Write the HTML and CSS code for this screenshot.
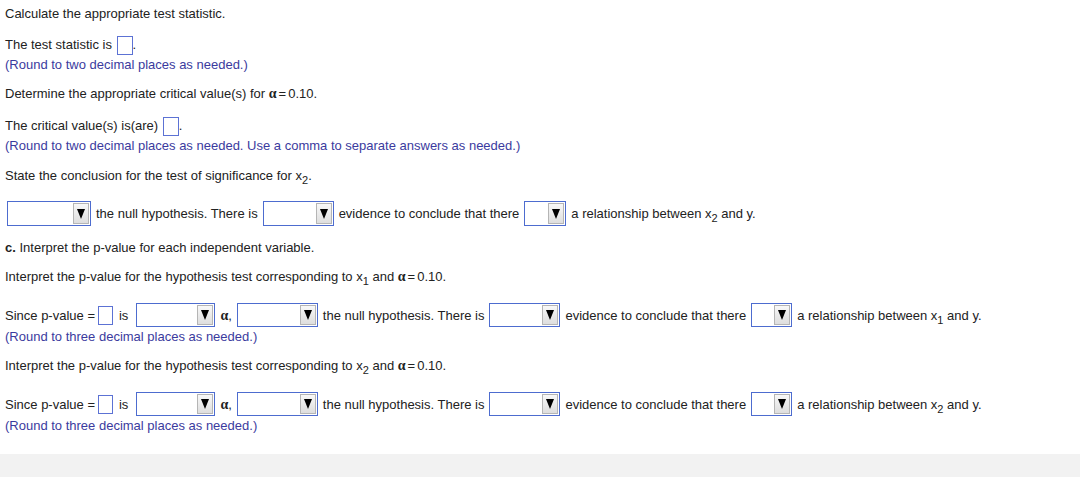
FILE: index.html
```html
<!DOCTYPE html>
<html>
<head>
<meta charset="utf-8">
<link rel="stylesheet" href="styles.css">
</head>
<body>
<div class="page">
  <div class="line l1">Calculate the appropriate test statistic.</div>
  <div class="line row20 m12">The test statistic is <span class="ans"></span>.</div>
  <div class="line note">(Round to two decimal places as needed.)</div>
  <div class="line m10">Determine the appropriate critical value(s) for <span class="alpha">α</span><span class="eq">=</span>0.10.</div>
  <div class="line row20 m13">The critical value(s) is(are) <span class="ans"></span>.</div>
  <div class="line note">(Round to two decimal places as needed. Use a comma to separate answers as needed.)</div>
  <div class="line m11">State the conclusion for the test of significance for x<sub>2</sub>.</div>
  <div class="line selrow r25">
    <span class="sel w84"><span class="btn"><i class="tri"></i></span></span>
    <span class="txt">the null hypothesis. There is</span>
    <span class="sel w71"><span class="btn"><i class="tri"></i></span></span>
    <span class="txt">evidence to conclude that there</span>
    <span class="sel w42"><span class="btn"><i class="tri"></i></span></span>
    <span class="txt">a relationship between x<sub>2</sub> and y.</span>
  </div>
  <div class="line m12"><b>c.</b> Interpret the p-value for each independent variable.</div>
  <div class="line m10">Interpret the p-value for the hypothesis test corresponding to x<sub>1</sub> and <span class="alpha">α</span><span class="eq">=</span>0.10.</div>
  <div class="line selrow r24 m17">
    <span class="txt">Since p-value =</span>
    <span class="ans small"></span>
    <span class="txt is">is</span>
    <span class="sel w79"><span class="btn"><i class="tri"></i></span></span>
    <span class="txt"><span class="alpha">α</span>,</span>
    <span class="sel w81"><span class="btn"><i class="tri"></i></span></span>
    <span class="txt">the null hypothesis. There is</span>
    <span class="sel w71"><span class="btn"><i class="tri"></i></span></span>
    <span class="txt">evidence to conclude that there</span>
    <span class="sel w41"><span class="btn"><i class="tri"></i></span></span>
    <span class="txt">a relationship between x<sub>1</sub> and y.</span>
  </div>
  <div class="line note">(Round to three decimal places as needed.)</div>
  <div class="line m10">Interpret the p-value for the hypothesis test corresponding to x<sub>2</sub> and <span class="alpha">α</span><span class="eq">=</span>0.10.</div>
  <div class="line selrow r24 m17">
    <span class="txt">Since p-value =</span>
    <span class="ans small"></span>
    <span class="txt is">is</span>
    <span class="sel w79"><span class="btn"><i class="tri"></i></span></span>
    <span class="txt"><span class="alpha">α</span>,</span>
    <span class="sel w81"><span class="btn"><i class="tri"></i></span></span>
    <span class="txt">the null hypothesis. There is</span>
    <span class="sel w71"><span class="btn"><i class="tri"></i></span></span>
    <span class="txt">evidence to conclude that there</span>
    <span class="sel w41"><span class="btn"><i class="tri"></i></span></span>
    <span class="txt">a relationship between x<sub>2</sub> and y.</span>
  </div>
  <div class="line note">(Round to three decimal places as needed.)</div>
</div>
<div class="footer"></div>
</body>
</html>
```
FILE: styles.css
```css
html, body {
  margin: 0;
  padding: 0;
  background: #fff;
}
body {
  font-family: "Liberation Sans", Arial, sans-serif;
  font-size: 13px;
  color: #222;
}
.page {
  padding: 4px 5px 0 5px;
  height: 450px;
  box-sizing: border-box;
}
.line {
  line-height: 19px;
  height: 19px;
  white-space: nowrap;
}
.row20 { height: 20px; line-height: 20px; }
.m10 { margin-top: 10px; }
.m11 { margin-top: 11px; }
.m12 { margin-top: 12px; }
.m13 { margin-top: 13px; }
.m17 { margin-top: 17px; }
.note {
  color: #3b3b9e;
}
.ans {
  display: inline-block;
  width: 14px;
  height: 17px;
  border: 1px solid #5c72d4;
  vertical-align: -6px;
  margin-left: 1px;
}
.ans.small {
  width: 13px;
  height: 17px;
  vertical-align: middle;
  margin-left: 0;
}
.alpha {
  font-family: "Liberation Serif", "Times New Roman", serif;
  font-size: 14px;
  font-weight: bold;
}
.eq {
  padding: 0 2px;
}
sub {
  font-size: 11px;
  vertical-align: -4px;
  line-height: 0;
}
.selrow {
  display: flex;
  align-items: center;
  padding-left: 2px;
}
.r25 { height: 25px; margin-top: 16px; }
.r24 { height: 24px; padding-left: 0; }
.txt {
  margin: 0 5px;
}
.selrow .txt:first-child { margin-left: 0; margin-right: 3px; }
.txt.is { margin: 0 8px 0 6px; }
.sel {
  display: flex;
  justify-content: flex-end;
  align-items: center;
  box-sizing: border-box;
  height: 100%;
  border: 1px solid #4d6ccf;
  background: #fff;
  padding: 0 1px;
}
.w84 { width: 84px; }
.w79 { width: 79px; }
.w81 { width: 81px; }
.w71 { width: 71px; }
.w42 { width: 42px; }
.w41 { width: 41px; }
.btn {
  display: flex;
  align-items: center;
  justify-content: center;
  box-sizing: border-box;
  width: 16px;
  height: calc(100% - 2px);
  border: 1px solid #b5b5b5;
  background: linear-gradient(#f8f8f8, #dedede);
}
.tri {
  display: block;
  width: 0;
  height: 0;
  border-left: 4.5px solid transparent;
  border-right: 4.5px solid transparent;
  border-top: 10px solid #000;
}
.footer {
  position: fixed;
  left: 0;
  right: 0;
  top: 454px;
  bottom: 0;
  background: #f2f2f2;
}
```
